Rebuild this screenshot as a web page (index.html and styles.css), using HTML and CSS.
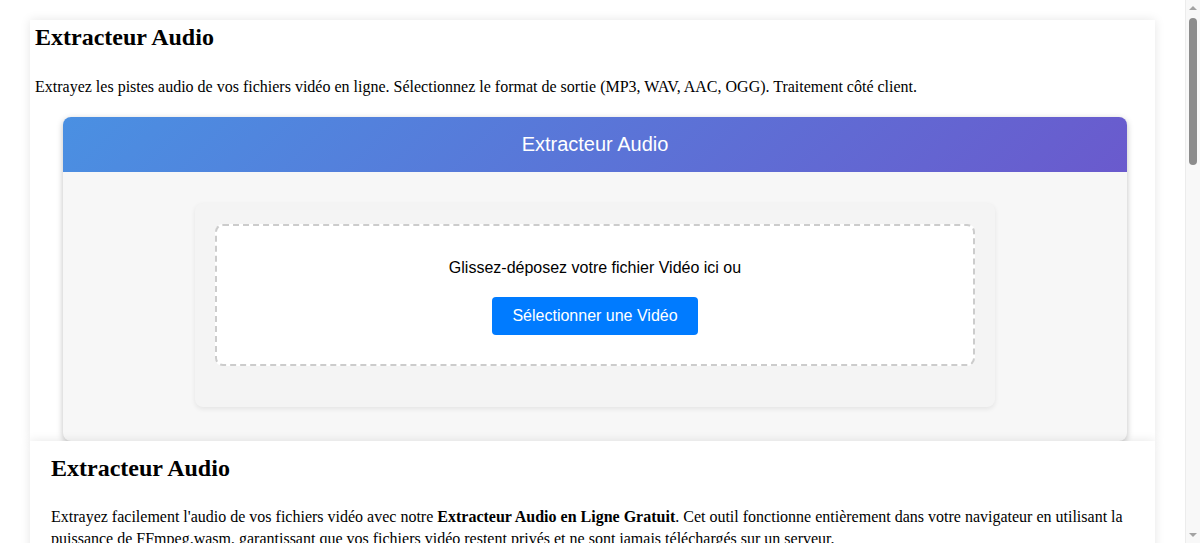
FILE: index.html
```html
<!DOCTYPE html>
<html lang="fr">
<head>
  <meta charset="UTF-8" />
  <title>Extracteur Audio</title>
  <link rel="stylesheet" href="styles.css">
</head>
<body>

  <div class="page">
    <div class="tool-section">
      <h2>Extracteur Audio</h2>
      <p class="intro">Extrayez les pistes audio de vos fichiers vidéo en ligne. Sélectionnez le format de sortie (MP3, WAV, AAC, OGG). Traitement côté client.</p>

      <div class="tool-card">
        <div class="tool-header">Extracteur Audio</div>
        <div class="tool-body">
          <div class="upload-panel">
            <div class="dropzone" id="dropzone">
              <p>Glissez-déposez votre fichier Vidéo ici ou</p>
              <button type="button" class="select-btn" id="selectBtn">Sélectionner une Vidéo</button>
              <input type="file" id="fileInput" accept="video/*" hidden />
            </div>
          </div>
        </div>
      </div>
    </div>

    <div class="info-section">
      <h2>Extracteur Audio</h2>
      <p>Extrayez facilement l'audio de vos fichiers vidéo avec notre <strong>Extracteur Audio en Ligne Gratuit</strong>. Cet outil fonctionne entièrement dans votre navigateur en utilisant la puissance de FFmpeg.wasm, garantissant que vos fichiers vidéo restent privés et ne sont jamais téléchargés sur un serveur.</p>

      <h3>Comment utiliser l'extracteur</h3>
      <ol>
        <li>Glissez-déposez votre fichier vidéo dans la zone prévue, ou cliquez sur « Sélectionner une Vidéo ».</li>
        <li>Choisissez le format de sortie souhaité : MP3, WAV, AAC ou OGG.</li>
        <li>Lancez l'extraction et patientez pendant le traitement dans votre navigateur.</li>
        <li>Téléchargez le fichier audio obtenu.</li>
      </ol>

      <h3>Formats pris en charge</h3>
      <p>L'outil accepte la plupart des formats vidéo courants : MP4, MOV, AVI, MKV, WEBM et bien d'autres. Le fichier audio peut être enregistré en MP3 pour une compatibilité maximale, en WAV pour une qualité sans perte, en AAC pour les appareils Apple ou en OGG pour un format libre.</p>

      <h3>Pourquoi utiliser notre outil ?</h3>
      <ul>
        <li><strong>Confidentialité :</strong> vos fichiers ne quittent jamais votre ordinateur.</li>
        <li><strong>Gratuit :</strong> aucune inscription, aucun abonnement.</li>
        <li><strong>Rapide :</strong> aucun temps de téléversement ni d'attente côté serveur.</li>
        <li><strong>Simple :</strong> une interface claire, utilisable en quelques clics.</li>
      </ul>

      <h3>Questions fréquentes</h3>
      <p><strong>Y a-t-il une limite de taille ?</strong><br>La limite dépend de la mémoire disponible dans votre navigateur. Les fichiers de quelques centaines de mégaoctets sont généralement traités sans problème.</p>
      <p><strong>La qualité audio est-elle conservée ?</strong><br>Oui. En choisissant WAV, la piste audio est extraite sans perte. Les formats compressés offrent un bon compromis entre qualité et taille.</p>
      <p><strong>L'outil fonctionne-t-il sur mobile ?</strong><br>Oui, il fonctionne sur les navigateurs modernes, mais le traitement peut être plus lent sur les appareils moins puissants.</p>
      <p><strong>Mes fichiers sont-ils envoyés quelque part ?</strong><br>Non. Tout le traitement est effectué localement grâce à FFmpeg.wasm.</p>
    </div>
  </div>

  <!-- barre de défilement (dessinée) -->
  <div class="scrollbar" aria-hidden="true">
    <span class="arrow-up"></span>
    <span class="thumb"></span>
    <span class="arrow-down"></span>
  </div>

  <script>
    const dropzone = document.getElementById('dropzone');
    const fileInput = document.getElementById('fileInput');
    const selectBtn = document.getElementById('selectBtn');

    // ouvrir le sélecteur de fichier
    selectBtn.addEventListener('click', function() {
      fileInput.click();
    });

    dropzone.addEventListener('dragover', function(event) {
      event.preventDefault();
      dropzone.classList.add('dragover');
    });

    dropzone.addEventListener('dragleave', function() {
      dropzone.classList.remove('dragover');
    });

    dropzone.addEventListener('drop', function(event) {
      event.preventDefault();
      dropzone.classList.remove('dragover');
    });
  </script>

</body>
</html>
```

FILE: styles.css
```css
body {
  margin: 0;
  font-family: "Liberation Serif", "Times New Roman", serif;
  font-size: 16px;
  color: #000;
  background: #fff;
}
.page {
  width: 1185px;
  box-sizing: border-box;
  padding: 20px 30px;
}
h2 {
  font-size: 24px;
  margin: 0;
}
.tool-section {
  background: #fff;
  padding: 4px 5px 0;
  box-shadow: 0 0 10px rgba(0, 0, 0, 0.1);
}
.intro {
  margin: 27px 0 21px;
}
.tool-card {
  margin: 0 23px 0 28px;
  border-radius: 8px;
  overflow: hidden;
  background: #f7f7f7;
  box-shadow: 0 2px 6px rgba(0, 0, 0, 0.25);
  font-family: "Liberation Sans", Arial, sans-serif;
}
.tool-header {
  padding: 16px;
  text-align: center;
  font-size: 20px;
  color: #fff;
  background: linear-gradient(135deg, #4a90e2, #6a5acd);
}
.tool-body {
  padding: 31px 20px 34px;
}
.upload-panel {
  max-width: 760px;
  margin: 0 auto;
  padding: 21px 20px 41px;
  background: #f4f4f4;
  border-radius: 8px;
  box-shadow: 0 2px 5px rgba(0, 0, 0, 0.08);
}
.dropzone {
  border: 2px dashed #ccc;
  border-radius: 8px;
  background: #fff;
  padding: 33px 20px 29px;
  text-align: center;
}
.dropzone p {
  margin: 0 0 20px;
}
.dropzone.dragover {
  border-color: #007bff;
}
.select-btn {
  padding: 10px 20px;
  line-height: 18px;
  background: #007bff;
  border: none;
  color: white;
  font-family: "Liberation Sans", Arial, sans-serif;
  font-size: 16px;
  cursor: pointer;
  border-radius: 4px;
}
.select-btn:hover {
  background: #0056b3;
}
.info-section {
  background: #fff;
  padding: 14px 20px 20px 21px;
  box-shadow: 0 0 10px rgba(0, 0, 0, 0.1);
  line-height: 1.35;
}
.info-section h2 {
  line-height: normal;
}
.info-section > p:first-of-type {
  margin-top: 24px;
}
h3 {
  font-size: 19px;
  margin: 26px 0 10px;
}
li {
  margin-bottom: 6px;
}

/* barre de défilement */
.scrollbar {
  position: fixed;
  top: 0;
  right: 0;
  width: 15px;
  height: 100%;
  background: #f8f8f8;
  border-left: 1px solid #ececec;
  box-sizing: border-box;
}
.thumb {
  position: absolute;
  top: 18px;
  left: 3px;
  width: 8px;
  height: 147px;
  background: #8c8c8c;
  border-radius: 4px;
}
.arrow-up,
.arrow-down {
  position: absolute;
  left: 3px;
  width: 0;
  height: 0;
  border-left: 4px solid transparent;
  border-right: 4px solid transparent;
}
.arrow-up {
  top: 6px;
  border-bottom: 4px solid #a3a3a3;
}
.arrow-down {
  bottom: 6px;
  border-top: 4px solid #a3a3a3;
}
```
